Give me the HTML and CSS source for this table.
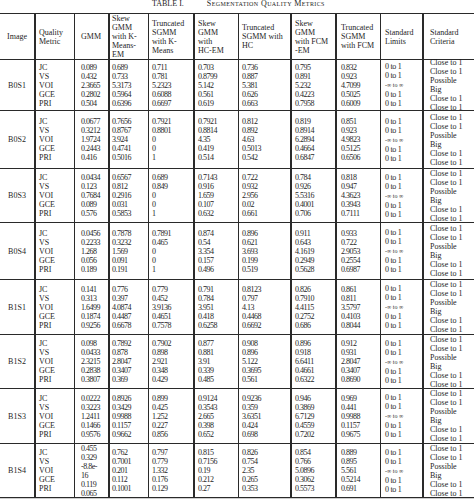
FILE: index.html
```html
<!DOCTYPE html>
<html lang="en">
<head>
<meta charset="utf-8">
<title>Segmentation Quality Metrics</title>
<link rel="stylesheet" href="styles.css">
</head>
<body>
<div class="page">
  <div class="caption"><span class="tno">TABLE I.</span><span class="ttl">Segmentation Quality Metrics</span></div>
  <div class="table">
    <div class="row head">
      <div class="c c1"><div>Image</div></div>
      <div class="c c2"><div>Quality<br>Metric</div></div>
      <div class="c c3"><div>GMM</div></div>
      <div class="c c4"><div>Skew<br>GMM<br>with K-<br>Means-<br>EM</div></div>
      <div class="c c5"><div>Truncated<br>SGMM<br>with K-<br>Means</div></div>
      <div class="c c6"><div>Skew<br>GMM<br>with<br>HC-EM</div></div>
      <div class="c c7"><div>Truncated<br>SGMM with<br>HC</div></div>
      <div class="c c8"><div>Skew<br>GMM<br>with FCM<br>-EM</div></div>
      <div class="c c9"><div>Truncated<br>SGMM<br>with FCM</div></div>
      <div class="c c10"><div>Standard<br>Limits</div></div>
      <div class="c c11"><div>Standard<br>Criteria</div></div>
    </div>

    <div class="row r1">
      <div class="c c1"><div>B0S1</div></div>
      <div class="c c2"><div>JC<br>VS<br>VOI<br>GCE<br>PRI</div></div>
      <div class="c c3 num"><div>0.089<br>0.432<br>2.3665<br>0.2802<br>0.504</div></div>
      <div class="c c4 num"><div>0.689<br>0.733<br>5.3173<br>0.5964<br>0.6396</div></div>
      <div class="c c5 num"><div>0.711<br>0.781<br>5.2323<br>0.6088<br>0.6697</div></div>
      <div class="c c6 num"><div>0.703<br>0.8799<br>5.142<br>0.561<br>0.619</div></div>
      <div class="c c7 num"><div>0.736<br>0.887<br>5.381<br>0.626<br>0.663</div></div>
      <div class="c c8 num"><div>0.795<br>0.891<br>5.232<br>0.4223<br>0.7958</div></div>
      <div class="c c9 num"><div>0.832<br>0.923<br>4.7099<br>0.5025<br>0.6009</div></div>
      <div class="c c10 lim"><div>0 to 1<br>0 to 1<br><span class="inf">-∞ to ∞</span><br>0 to 1<br>0 to 1</div></div>
      <div class="c c11"><div>Close to 1<br>Close to 1<br>Possible<br>Big<br>Close to 1<br>Close to 1</div></div>
    </div>

    <div class="row r2">
      <div class="c c1"><div>B0S2</div></div>
      <div class="c c2"><div>JC<br>VS<br>VOI<br>GCE<br>PRI</div></div>
      <div class="c c3 num"><div>0.0677<br>0.3212<br>1.9724<br>0.2443<br>0.416</div></div>
      <div class="c c4 num"><div>0.7656<br>0.8767<br>3.924<br>0.4741<br>0.5016</div></div>
      <div class="c c5 num"><div>0.7921<br>0.8801<br>0<br>0<br>1</div></div>
      <div class="c c6 num"><div>0.7921<br>0.8814<br>4.35<br>0.419<br>0.514</div></div>
      <div class="c c7 num"><div>0.812<br>0.892<br>4.63<br>0.5013<br>0.542</div></div>
      <div class="c c8 num"><div>0.819<br>0.8914<br>6.2894<br>0.4664<br>0.6847</div></div>
      <div class="c c9 num"><div>0.851<br>0.923<br>4.9823<br>0.5125<br>0.6506</div></div>
      <div class="c c10 lim"><div>0 to 1<br>0 to 1<br><span class="inf">-∞ to ∞</span><br>0 to 1<br>0 to 1</div></div>
      <div class="c c11"><div>Close to 1<br>Close to 1<br>Possible<br>Big<br>Close to 1<br>Close to 1</div></div>
    </div>

    <div class="row r3">
      <div class="c c1"><div>B0S3</div></div>
      <div class="c c2"><div>JC<br>VS<br>VOI<br>GCE<br>PRI</div></div>
      <div class="c c3 num"><div>0.0434<br>0.123<br>0.7684<br>0.089<br>0.576</div></div>
      <div class="c c4 num"><div>0.6567<br>0.812<br>0.2916<br>0.031<br>0.5853</div></div>
      <div class="c c5 num"><div>0.689<br>0.849<br>0<br>0<br>1</div></div>
      <div class="c c6 num"><div>0.7143<br>0.916<br>1.659<br>0.107<br>0.632</div></div>
      <div class="c c7 num"><div>0.722<br>0.932<br>2.956<br>0.02<br>0.661</div></div>
      <div class="c c8 num"><div>0.784<br>0.926<br>5.5316<br>0.4001<br>0.706</div></div>
      <div class="c c9 num"><div>0.818<br>0.947<br>4.3623<br>0.3943<br>0.7111</div></div>
      <div class="c c10 lim"><div>0 to 1<br>0 to 1<br><span class="inf">-∞ to ∞</span><br>0 to 1<br>0 to 1</div></div>
      <div class="c c11"><div>Close to 1<br>Close to 1<br>Possible<br>Big<br>Close to 1<br>Close to 1</div></div>
    </div>

    <div class="row r4">
      <div class="c c1"><div>B0S4</div></div>
      <div class="c c2"><div>JC<br>VS<br>VOI<br>GCE<br>PRI</div></div>
      <div class="c c3 num"><div>0.0456<br>0.2233<br>1.268<br>0.056<br>0.189</div></div>
      <div class="c c4 num"><div>0.7878<br>0.3232<br>1.569<br>0.091<br>0.191</div></div>
      <div class="c c5 num"><div>0.7891<br>0.465<br>0<br>0<br>1</div></div>
      <div class="c c6 num"><div>0.874<br>0.54<br>3.354<br>0.157<br>0.496</div></div>
      <div class="c c7 num"><div>0.896<br>0.621<br>3.693<br>0.199<br>0.519</div></div>
      <div class="c c8 num"><div>0.911<br>0.643<br>4.1619<br>0.2949<br>0.5628</div></div>
      <div class="c c9 num"><div>0.933<br>0.722<br>2.9053<br>0.2554<br>0.6987</div></div>
      <div class="c c10 lim"><div>0 to 1<br>0 to 1<br><span class="inf">-∞ to ∞</span><br>0 to 1<br>0 to 1</div></div>
      <div class="c c11"><div>Close to 1<br>Close to 1<br>Possible<br>Big<br>Close to 1<br>Close to 1</div></div>
    </div>

    <div class="row r5">
      <div class="c c1"><div>B1S1</div></div>
      <div class="c c2"><div>JC<br>VS<br>VOI<br>GCE<br>PRI</div></div>
      <div class="c c3 num"><div>0.141<br>0.313<br>1.6499<br>0.1874<br>0.9256</div></div>
      <div class="c c4 num"><div>0.776<br>0.397<br>4.0874<br>0.4487<br>0.6678</div></div>
      <div class="c c5 num"><div>0.779<br>0.452<br>3.9136<br>0.4651<br>0.7578</div></div>
      <div class="c c6 num"><div>0.791<br>0.784<br>3.951<br>0.418<br>0.6258</div></div>
      <div class="c c7 num"><div>0.8123<br>0.797<br>4.13<br>0.4468<br>0.6692</div></div>
      <div class="c c8 num"><div>0.826<br>0.7910<br>4.4115<br>0.2752<br>0.686</div></div>
      <div class="c c9 num"><div>0.861<br>0.811<br>3.5797<br>0.4103<br>0.8044</div></div>
      <div class="c c10 lim"><div>0 to 1<br>0 to 1<br><span class="inf">-∞ to ∞</span><br>0 to 1<br>0 to 1</div></div>
      <div class="c c11"><div>Close to 1<br>Close to 1<br>Possible<br>Big<br>Close to 1<br>Close to 1</div></div>
    </div>

    <div class="row r6">
      <div class="c c1"><div>B1S2</div></div>
      <div class="c c2"><div>JC<br>VS<br>VOI<br>GCE<br>PRI</div></div>
      <div class="c c3 num"><div>0.098<br>0.0433<br>2.3215<br>0.2838<br>0.3807</div></div>
      <div class="c c4 num"><div>0.7892<br>0.878<br>2.8047<br>0.3407<br>0.369</div></div>
      <div class="c c5 num"><div>0.7902<br>0.898<br>2.921<br>0.348<br>0.429</div></div>
      <div class="c c6 num"><div>0.877<br>0.881<br>3.91<br>0.339<br>0.485</div></div>
      <div class="c c7 num"><div>0.908<br>0.896<br>5.122<br>0.3695<br>0.561</div></div>
      <div class="c c8 num"><div>0.896<br>0.918<br>6.6411<br>0.4661<br>0.6322</div></div>
      <div class="c c9 num"><div>0.912<br>0.931<br>2.8047<br>0.3407<br>0.8690</div></div>
      <div class="c c10 lim"><div>0 to 1<br>0 to 1<br><span class="inf">-∞ to ∞</span><br>0 to 1<br>0 to 1</div></div>
      <div class="c c11"><div>Close to 1<br>Close to 1<br>Possible<br>Big<br>Close to 1<br>Close to 1</div></div>
    </div>

    <div class="row r7">
      <div class="c c1"><div>B1S3</div></div>
      <div class="c c2"><div>JC<br>VS<br>VOI<br>GCE<br>PRI</div></div>
      <div class="c c3 num"><div>0.0222<br>0.3223<br>1.2411<br>0.1466<br>0.9576</div></div>
      <div class="c c4 num"><div>0.8926<br>0.3429<br>0.9988<br>0.1157<br>0.9662</div></div>
      <div class="c c5 num"><div>0.899<br>0.425<br>1.252<br>0.227<br>0.856</div></div>
      <div class="c c6 num"><div>0.9124<br>0.3543<br>2.665<br>0.398<br>0.652</div></div>
      <div class="c c7 num"><div>0.9236<br>0.359<br>3.6351<br>0.424<br>0.698</div></div>
      <div class="c c8 num"><div>0.946<br>0.3869<br>6.7129<br>0.4559<br>0.7202</div></div>
      <div class="c c9 num"><div>0.969<br>0.441<br>0.9988<br>0.1157<br>0.9675</div></div>
      <div class="c c10 lim"><div>0 to 1<br>0 to 1<br><span class="inf">-∞ to ∞</span><br>0 to 1<br>0 to 1</div></div>
      <div class="c c11"><div>Close to 1<br>Close to 1<br>Possible<br>Big<br>Close to 1<br>Close to 1</div></div>
    </div>

    <div class="row r8">
      <div class="c c1"><div>B1S4</div></div>
      <div class="c c2"><div>JC<br>VS<br>VOI<br>GCE<br>PRI</div></div>
      <div class="c c3 num"><div>0.455<br>0.329<br>-8.8e-<br>16<br>0.119<br>0.065</div></div>
      <div class="c c4 num"><div>0.762<br>0.7001<br>0.201<br>0.112<br>0.1001</div></div>
      <div class="c c5 num"><div>0.797<br>0.779<br>1.332<br>0.176<br>0.129</div></div>
      <div class="c c6 num"><div>0.815<br>0.7156<br>0.19<br>0.212<br>0.27</div></div>
      <div class="c c7 num"><div>0.826<br>0.754<br>2.35<br>0.265<br>0.353</div></div>
      <div class="c c8 num"><div>0.854<br>0.766<br>5.0896<br>0.3062<br>0.5573</div></div>
      <div class="c c9 num"><div>0.889<br>0.895<br>5.561<br>0.5214<br>0.691</div></div>
      <div class="c c10 lim"><div>0 to 1<br>0 to 1<br><span class="inf">-∞ to ∞</span><br>0 to 1<br>0 to 1</div></div>
      <div class="c c11"><div>Close to 1<br>Close to 1<br>Possible<br>Big<br>Close to 1<br>Close to 1</div></div>
    </div>
  </div>
</div>
</body>
</html>
```

FILE: styles.css
```css
* { box-sizing: border-box; }

html, body {
  margin: 0;
  padding: 0;
}

body {
  background: #cdcdcd;
  font-family: "Liberation Serif", "Times New Roman", serif;
  font-size: 8px;
  color: #1e1e1e;
}

.page {
  width: 474px;
  height: 498px;
  background: #fff;
  overflow: hidden;
}

.caption {
  height: 13px;
  line-height: 8px;
  padding-left: 152px;
  display: flex;
  gap: 23px;
  white-space: nowrap;
}

.caption .ttl {
  font-variant: small-caps;
  letter-spacing: 0.4px;
}

.table {
  border-top: 1px solid #2a2a2a;
}

.row {
  display: flex;
  border-bottom: 1px solid #2a2a2a;
}

.head { height: 46px; }
.r1 { height: 51px; }
.r2 { height: 58px; }
.r3 { height: 54px; }
.r4 { height: 57px; }
.r5 { height: 55px; }
.r6 { height: 54px; }
.r7 { height: 55px; }
.r8 { height: 54px; }

.c {
  display: flex;
  align-items: center;
  flex: none;
  line-height: 9px;
  white-space: nowrap;
  border-right: 1px solid #2a2a2a;
}

.c1  { width: 36px; justify-content: center; border-right-width: 2px; }
.c2  { width: 39px; padding-left: 3px; }
.c3  { width: 35px; padding-left: 6px; border-right-width: 2px; }
.c4  { width: 39px; padding-left: 2px; }
.c5  { width: 46px; padding-left: 3px; border-right-width: 2px; }
.c6  { width: 44px; padding-left: 3px; }
.c7  { width: 53px; padding-left: 3px; border-right-width: 2px; }
.c8  { width: 45px; padding-left: 3px; border-right-width: 2px; }
.c9  { width: 44px; padding-left: 4px; }
.c10 { width: 43px; padding-left: 4px; border-right-width: 2px; }
.c11 { width: 50px; padding-left: 6px; border-right: none; }

.num {
  letter-spacing: -0.5px;
}

.lim {
  letter-spacing: -0.3px;
}

.inf {
  font-size: 6px;
  letter-spacing: 0;
}
```
